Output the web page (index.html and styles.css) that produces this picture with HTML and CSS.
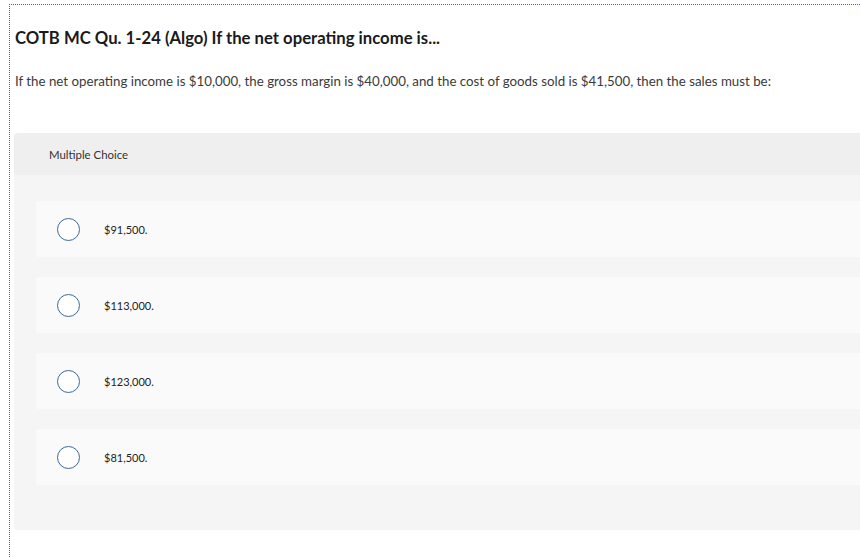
FILE: index.html
```html
<!DOCTYPE html>
<html lang="en">
<head>
<meta charset="utf-8">
<title>COTB MC Qu. 1-24</title>
<link rel="stylesheet" href="styles.css">
</head>
<body>
<div class="frame">
  <h1 class="title">COTB MC Qu. 1-24 (Algo) If the net operating income is...</h1>
  <p class="question">If the net operating income is $10,000, the gross margin is $40,000, and the cost of goods sold is $41,500, then the sales must be:</p>
  <section class="panel">
    <div class="panel-head">Multiple Choice</div>
    <ul class="options">
      <li class="option"><span class="radio"></span><span class="label">$91,500.</span></li>
      <li class="option"><span class="radio"></span><span class="label">$113,000.</span></li>
      <li class="option"><span class="radio"></span><span class="label">$123,000.</span></li>
      <li class="option"><span class="radio"></span><span class="label">$81,500.</span></li>
    </ul>
  </section>
</div>
</body>
</html>
```
FILE: styles.css
```css
html, body {
  margin: 0;
  padding: 0;
  background: #ffffff;
  overflow: hidden;
}
body {
  height: 100vh;
  font-family: Lato, "Liberation Sans", sans-serif;
  color: #333333;
}
.frame {
  box-sizing: border-box;
  margin: 4px 0 0 9px;
  height: calc(100vh - 4px);
  border-top: 1px dotted #2a72c8;
  border-left: 1px dotted #2a72c8;
  padding-left: 4px;
}
.title {
  margin: 23px 0 0 1px;
  font-size: 16.7px;
  line-height: 20px;
  font-weight: 700;
  color: #1a1a1a;
}
.question {
  margin: 24px 0 0 1px;
  font-size: 13.3px;
  line-height: 18px;
  color: #3a3a3a;
  white-space: nowrap;
}
.panel {
  margin-top: 43px;
  background: #f5f5f5;
  border-radius: 4px 0 0 4px;
}
.panel-head {
  height: 42px;
  display: flex;
  align-items: center;
  padding-left: 35px;
  background: #efefef;
  border-radius: 4px 0 0 0;
  font-size: 11.4px;
  color: #333333;
}
.options {
  list-style: none;
  margin: 0;
  padding: 26px 0 45px 22px;
  display: flex;
  flex-direction: column;
  gap: 20px;
}
.option {
  height: 56px;
  display: flex;
  align-items: center;
  padding-left: 21px;
  gap: 24px;
  background: #fafafa;
  border-radius: 3px 0 0 3px;
}
.radio {
  width: 21px;
  height: 21px;
  border: 1.5px solid #3d6996;
  border-radius: 50%;
  background: #ffffff;
  flex: none;
}
.label {
  font-size: 11px;
  color: #222222;
}
```
